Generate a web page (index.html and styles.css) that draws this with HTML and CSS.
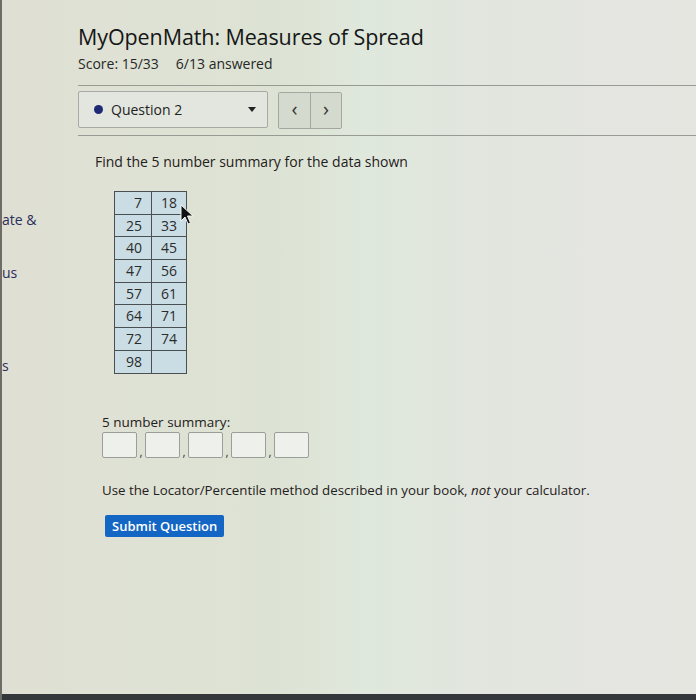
FILE: index.html
```html
<!DOCTYPE html>
<html lang="en">
<head>
<meta charset="utf-8">
<title>MyOpenMath: Measures of Spread</title>
<link rel="stylesheet" href="styles.css">
</head>
<body>
<div class="screen">
  <div class="page">
    <nav class="sidebar">
      <span class="side-link first">ate &amp;</span>
      <span class="side-link second">us</span>
      <span class="side-link third">s</span>
    </nav>
    <main class="main">
      <header class="header">
        <h1 class="title">MyOpenMath: Measures of Spread</h1>
        <div class="score"><span>Score: 15/33</span><span>6/13 answered</span></div>
      </header>
      <div class="toolbar">
        <div class="select">
          <span class="dot"></span>
          <span class="select-label">Question 2</span>
          <span class="caret"></span>
        </div>
        <div class="pager">
          <button class="pager-btn" type="button">&lsaquo;</button>
          <button class="pager-btn" type="button">&rsaquo;</button>
        </div>
      </div>
      <section class="question">
        <p class="prompt">Find the 5 number summary for the data shown</p>
        <div class="table-wrap">
          <table class="data">
            <tr><td>7</td><td>18</td></tr>
            <tr><td>25</td><td>33</td></tr>
            <tr><td>40</td><td>45</td></tr>
            <tr><td>47</td><td>56</td></tr>
            <tr><td>57</td><td>61</td></tr>
            <tr><td>64</td><td>71</td></tr>
            <tr><td>72</td><td>74</td></tr>
            <tr><td>98</td><td></td></tr>
          </table>
          <svg class="cursor" width="14" height="22" viewBox="0 0 14 22">
            <path d="M1 1 L1 17 L5 13 L8 20 L10.5 19 L7.5 12 L13 12 Z" fill="#111" stroke="#f4f4f4" stroke-width="1" stroke-linejoin="round"/>
          </svg>
        </div>
        <div class="answer">
          <p class="summary-label">5 number summary:</p>
          <div class="inputs">
            <span class="box"></span><span class="comma">,</span>
            <span class="box"></span><span class="comma">,</span>
            <span class="box"></span><span class="comma">,</span>
            <span class="box"></span><span class="comma">,</span>
            <span class="box"></span>
          </div>
          <p class="note">Use the Locator/Percentile method described in your book, <em>not</em> your calculator.</p>
          <button class="submit" type="button">Submit Question</button>
        </div>
      </section>
    </main>
  </div>
  <div class="bezel"></div>
</div>
</body>
</html>
```

FILE: styles.css
```css
html, body {
  margin: 0;
  padding: 0;
}
body {
  width: 696px;
  height: 700px;
  overflow: hidden;
  font-family: "Open Sans", "Noto Sans", sans-serif;
  color: #1f2020;
}
.screen {
  height: 700px;
  display: flex;
  flex-direction: column;
  background: linear-gradient(90deg, #dfe0d3 0%, #dde3d4 40%, #dfe8dc 52%, #e3e5df 75%, #e6e6e1 100%);
  border-left: 2px solid #6b6d66;
  box-sizing: border-box;
}
.page {
  flex: 1;
  display: grid;
  grid-template-columns: 76px 1fr;
}
.bezel {
  height: 6px;
  background: #34383a;
}
.sidebar {
  display: flex;
  flex-direction: column;
  overflow: hidden;
  padding-top: 210px;
  font-size: 14px;
  line-height: 20px;
  color: #2b2d5c;
}
.side-link {
  white-space: nowrap;
}
.side-link.second {
  margin-top: 33px;
}
.side-link.third {
  margin-top: 73px;
}
.main {
  display: flex;
  flex-direction: column;
}
.header {
  padding-top: 21px;
  padding-bottom: 10px;
  border-bottom: 1px solid #979b94;
}
.title {
  margin: 0;
  font-size: 21.5px;
  font-weight: 500;
  line-height: 32px;
  color: #151616;
  letter-spacing: -0.1px;
}
.score {
  display: flex;
  gap: 17px;
  font-size: 14px;
  line-height: 22px;
  color: #262727;
}
.toolbar {
  display: flex;
  gap: 10px;
  padding-top: 5px;
  padding-bottom: 6px;
  border-bottom: 1px solid #979b94;
}
.select {
  width: 190px;
  height: 37px;
  box-sizing: border-box;
  border: 1px solid #a7aaa4;
  border-radius: 2px;
  display: flex;
  align-items: center;
  padding: 0 10px 0 15px;
  background: #e3e6df;
}
.dot {
  width: 9px;
  height: 9px;
  border-radius: 50%;
  background: #1d2a73;
  margin-right: 8px;
}
.select-label {
  flex: 1;
  font-size: 14px;
  color: #222;
}
.caret {
  width: 0;
  height: 0;
  border-left: 4px solid transparent;
  border-right: 4px solid transparent;
  border-top: 5px solid #222;
  margin-right: 1px;
}
.pager {
  display: flex;
  height: 37px;
  border: 1px solid #a3a7a0;
  border-radius: 2px;
  box-sizing: border-box;
  margin-top: 1px;
}
.pager-btn {
  width: 31px;
  height: 35px;
  border: 0;
  background: #d4dacd;
  font-family: "Open Sans", sans-serif;
  font-size: 20px;
  line-height: 20px;
  color: #333;
  padding: 0 0 3px;
}
.pager-btn + .pager-btn {
  border-left: 1px solid #a3a7a0;
}
.question {
  padding-left: 17px;
}
.prompt {
  margin: 16px 0 0;
  font-size: 14px;
  line-height: 20px;
  color: #1f2020;
}
.table-wrap {
  position: relative;
  margin: 19px 0 0 19px;
  width: 90px;
}
.data {
  border-collapse: collapse;
  font-size: 14px;
  color: #2a2c2c;
}
.data td {
  border: 1px solid #4a4f52;
  background: #cbdde4;
  height: 21.7px;
  padding: 0 9px 0 0;
  text-align: right;
  line-height: 20px;
}
.data td:first-child {
  width: 27px;
}
.data td:last-child {
  width: 25px;
}
.cursor {
  position: absolute;
  left: 66px;
  top: 13px;
}
.answer {
  padding-left: 7px;
}
.summary-label {
  margin: 38px 0 0;
  font-size: 13.5px;
  line-height: 20px;
}
.inputs {
  display: flex;
  align-items: flex-end;
  margin-top: 0;
}
.box {
  width: 33px;
  height: 24px;
  border: 1px solid #9a9d98;
  border-radius: 2px;
  background: #eef0ec;
}
.comma {
  width: 8px;
  text-align: center;
  font-size: 12px;
  line-height: 12px;
  color: #444;
}
.note {
  margin: 22px 0 0;
  font-size: 13.3px;
  line-height: 20px;
  color: #1f2020;
}
.submit {
  margin-top: 15px;
  margin-left: 3px;
  height: 22px;
  padding: 0 7px;
  border: 0;
  border-radius: 2px;
  background: #1466c4;
  color: #fff;
  font-family: "Open Sans", sans-serif;
  font-size: 13px;
  font-weight: 600;
  line-height: 22px;
}
```
